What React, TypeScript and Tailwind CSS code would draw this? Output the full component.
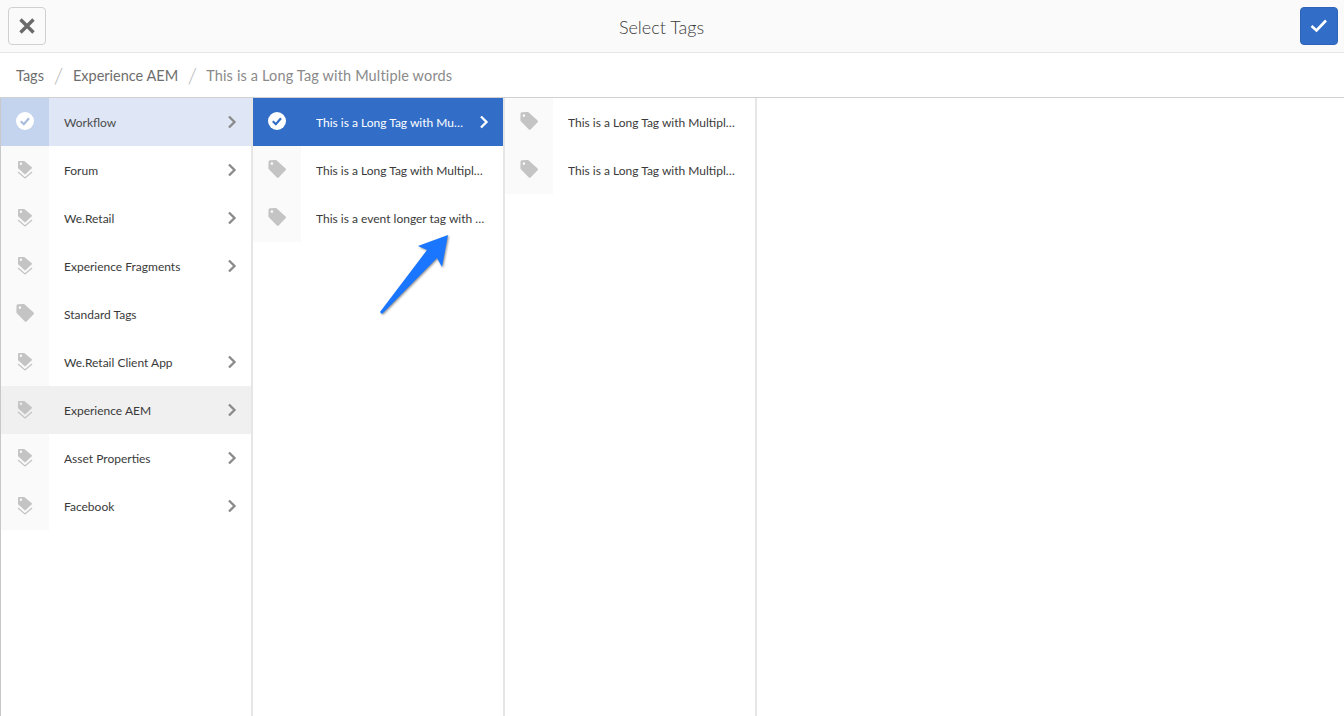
const FONT = "font-['Lato','Noto_Sans',sans-serif]";

function TagIcon() {
  return (
    <svg width="18" height="18" viewBox="0 0 18 18" className="block -translate-y-px">
      <path
        fillRule="evenodd"
        fill="#c4c4c4"
        d="M.5 2C.5 1 1.100.400 2 .300L7.500 0c.5 0 .9.100 1.200.400l8.900 8.200c.5.500.5 1.200 0 1.700l-7 7.200c-.5.500-1.200.500-1.700 0L.8 9.300C.5 9 .4 8.600.4 8.200L.5 2ZM3.900 2.300a1.300 1.300 0 1 0 0 2.600 1.300 1.300 0 0 0 0-2.600Z"
      />
    </svg>
  );
}

function TagsIcon() {
  return (
    <svg width="16" height="19" viewBox="0 0 16 19" className="block -translate-y-px">
      <path
        fillRule="evenodd"
        fill="#c4c4c4"
        d="M1 1.900C1 1.400 1.400 1 1.900 1H6.800c.3 0 .6.100.8.300l7 5.800c.5.400.5 1.100 0 1.500l-5.900 5.300c-.4.300-.9.300-1.300 0L1.300 8.600C1.100 8.400 1 8.100 1 7.800V1.900ZM3.900 2.600a1.200 1.200 0 1 0 0 2.400 1.200 1.200 0 0 0 0-2.400Z"
      />
      <path d="M1 12l7 6 7-6" fill="none" stroke="#c4c4c4" strokeWidth="1.300" />
    </svg>
  );
}

function CheckCircle({ color }: { color: string }) {
  return (
    <svg width="18" height="18" viewBox="0 0 18 18" className="block -translate-y-px">
      <circle cx="9" cy="9" r="9" fill="#fff" />
      <path d="M4.800 9.300l3 2.900 5.200-6" fill="none" stroke={color} strokeWidth="2.200" />
    </svg>
  );
}

function Chevron({ color = "#8a8a8a" }: { color?: string }) {
  return (
    <svg width="10" height="14" viewBox="0 0 10 14" className="block">
      <path d="M2 1.500 7.500 7 2 12.500" fill="none" stroke={color} strokeWidth="2.300" />
    </svg>
  );
}

type Row = { label: string; stack?: boolean; chevron?: boolean; state?: "picked" | "active" | "hover" };

const first: Row[] = [
  { label: "Workflow", stack: true, chevron: true, state: "picked" },
  { label: "Forum", stack: true, chevron: true },
  { label: "We.Retail", stack: true, chevron: true },
  { label: "Experience Fragments", stack: true, chevron: true },
  { label: "Standard Tags" },
  { label: "We.Retail Client App", stack: true, chevron: true },
  { label: "Experience AEM", stack: true, chevron: true, state: "hover" },
  { label: "Asset Properties", stack: true, chevron: true },
  { label: "Facebook", stack: true, chevron: true },
];

const second: Row[] = [
  { label: "This is a Long Tag with Multiple words", chevron: true, state: "active" },
  { label: "This is a Long Tag with Multiple words" },
  { label: "This is a event longer tag with more words" },
];

const third: Row[] = [
  { label: "This is a Long Tag with Multiple words" },
  { label: "This is a Long Tag with Multiple words" },
];

function TagRow({ row }: { row: Row }) {
  const rowBg =
    row.state === "active"
      ? "bg-[#326ec8] text-white"
      : row.state === "picked"
        ? "bg-[#dfe7f6] text-[#4b4b4b]"
        : row.state === "hover"
          ? "bg-[#f0f0f0] text-[#3a3a3a]"
          : "text-[#3a3a3a]";
  const thumbBg =
    row.state === "active"
      ? "bg-[#326ec8]"
      : row.state === "picked"
        ? "bg-[#c4d4ee]"
        : row.state === "hover"
          ? "bg-[#f0f0f0]"
          : "bg-[#fafafa]";

  return (
    <div className={"flex h-12 items-center " + rowBg}>
      <div className={"flex h-12 w-12 shrink-0 items-center justify-center " + thumbBg}>
        {row.state === "active" ? (
          <CheckCircle color="#326ec8" />
        ) : row.state === "picked" ? (
          <CheckCircle color="#a9bcdc" />
        ) : row.stack ? (
          <TagsIcon />
        ) : (
          <TagIcon />
        )}
      </div>
      <div className="ml-[15px] min-w-0 flex-1 translate-y-px truncate text-[12px]">{row.label}</div>
      <div className={"flex shrink-0 items-center " + (row.chevron ? "w-[39px] pl-[15px]" : "w-[15px]")}>
        {row.chevron && <Chevron color={row.state === "active" ? "#fff" : "#8a8a8a"} />}
      </div>
    </div>
  );
}

function Column({ rows, width }: { rows: Row[]; width: string }) {
  return (
    <div className={"h-full shrink-0 border-r-2 border-[#e6e6e6] " + width}>
      {rows.map((r, i) => (
        <TagRow key={i} row={r} />
      ))}
    </div>
  );
}

function Slash({ width }: { width: string }) {
  return <span className={"text-center text-[22px] font-light text-[#b5b5b5] " + width}>/</span>;
}

export default function App() {
  return (
    <div className={"relative flex h-[716px] w-[1344px] flex-col overflow-hidden bg-white " + FONT}>
      <header className="flex h-[53px] shrink-0 items-center justify-between border-b border-[#e6e6e6] bg-[#fafafa] pl-2 pr-[6px]">
        <button className="flex h-[38px] w-[38px] items-center justify-center rounded border border-[#d0d0d0]">
          <svg width="18" height="18" viewBox="0 0 18 18">
            <path d="M2.500 2.500l13 13M15.500 2.500l-13 13" stroke="#6a6a6a" strokeWidth="3.400" />
          </svg>
        </button>
        <div className="mr-[23px] translate-y-px text-[18px] font-light text-[#3a3a3a]">Select Tags</div>
        <button className="flex h-[38px] w-[38px] items-center justify-center rounded border border-[#2d64b9] bg-[#326ec8]">
          <svg width="18" height="14" viewBox="0 0 18 14">
            <path d="M1.500 7l5 4.500 9.500-10" fill="none" stroke="#fff" strokeWidth="2.600" />
          </svg>
        </button>
      </header>

      <nav className="flex h-[45px] shrink-0 items-center border-b border-[#d0d0d0] pl-4 pt-px text-[14.5px] text-[#6e6e6e]">
        <span>Tags</span>
        <Slash width="w-[29px]" />
        <span>Experience AEM</span>
        <Slash width="w-[28px]" />
        <span className="tracking-[0.15px] text-[#8a8a8a]">This is a Long Tag with Multiple words</span>
      </nav>

      <div className="flex min-h-0 flex-1 border-l border-[#c8c8c8]">
        <Column rows={first} width="w-[252px]" />
        <Column rows={second} width="w-[252px]" />
        <Column rows={third} width="w-[252px]" />
      </div>

      {/* Annotation arrow pasted over the screenshot */}
      <svg
        width="80"
        height="90"
        viewBox="0 0 80 90"
        className="absolute left-[375px] top-[232px] drop-shadow-[1px_1px_1px_rgba(0,0,0,0.45)]"
      >
        <path d="M73 3 L43 14 L52 18 L5 80 L7 82 L62 26 L67 35 Z" fill="#1a76ff" />
      </svg>
    </div>
  );
}
